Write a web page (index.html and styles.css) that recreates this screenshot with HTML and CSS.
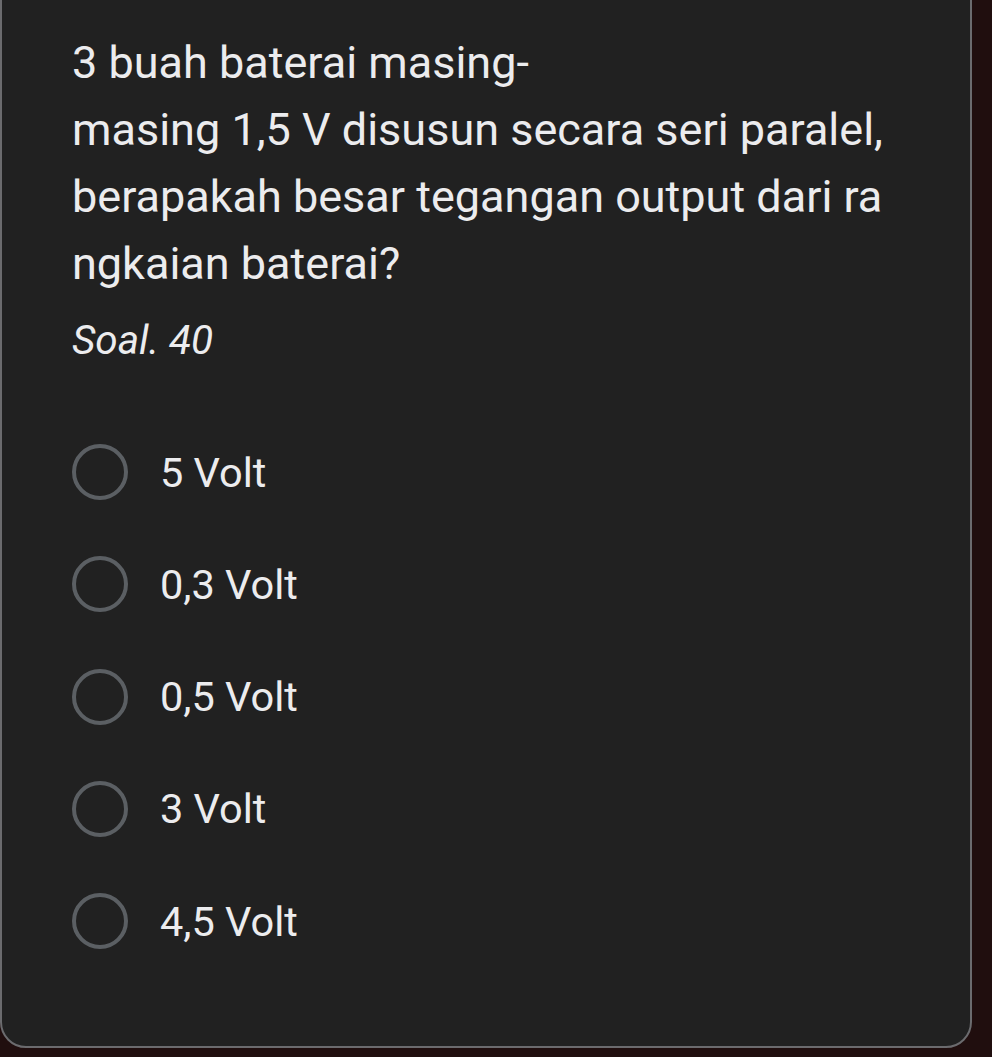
FILE: index.html
```html
<!DOCTYPE html>
<html>
<head>
<meta charset="utf-8">
<link rel="stylesheet" href="styles.css">
</head>
<body>
<div class="card">
  <div class="question">
    <div class="line">3 buah baterai masing-</div>
    <div class="line">masing 1,5 V disusun secara seri paralel,</div>
    <div class="line">berapakah besar tegangan output dari ra</div>
    <div class="line">ngkaian baterai?</div>
  </div>
  <div class="label">Soal. 40</div>
  <div class="options">
    <div class="option"><span class="radio"></span><span class="opt-text">5 Volt</span></div>
    <div class="option"><span class="radio"></span><span class="opt-text">0,3 Volt</span></div>
    <div class="option"><span class="radio"></span><span class="opt-text">0,5 Volt</span></div>
    <div class="option"><span class="radio"></span><span class="opt-text">3 Volt</span></div>
    <div class="option"><span class="radio"></span><span class="opt-text">4,5 Volt</span></div>
  </div>
</div>
</body>
</html>
```
FILE: styles.css
```css
html, body {
  margin: 0;
  padding: 0;
  background: #200e0e;
  width: 992px;
  height: 1057px;
  overflow: hidden;
}
body {
  font-family: Roboto, "Noto Sans", sans-serif;
  color: #ececee;
}
.card {
  box-sizing: border-box;
  margin-left: 0;
  margin-top: -30px;
  width: 972px;
  height: 1078px;
  background: #212121;
  border: 2px solid #6b6b6e;
  border-radius: 0 0 26px 26px;
  padding: 57px 0 0 70px;
}
.question {
  font-size: 45px;
  line-height: 67px;
  white-space: nowrap;
}
.label {
  font-style: italic;
  font-size: 40.5px;
  line-height: 86px;
}
.options {
  margin-top: 33px;
  display: flex;
  flex-direction: column;
}
.option {
  display: flex;
  align-items: center;
  height: 112.25px;
}
.radio {
  box-sizing: border-box;
  width: 56px;
  height: 56px;
  border: 4px solid #5b5f63;
  border-radius: 50%;
  flex: none;
}
.opt-text {
  margin-left: 32px;
  font-size: 41.5px;
}
```
